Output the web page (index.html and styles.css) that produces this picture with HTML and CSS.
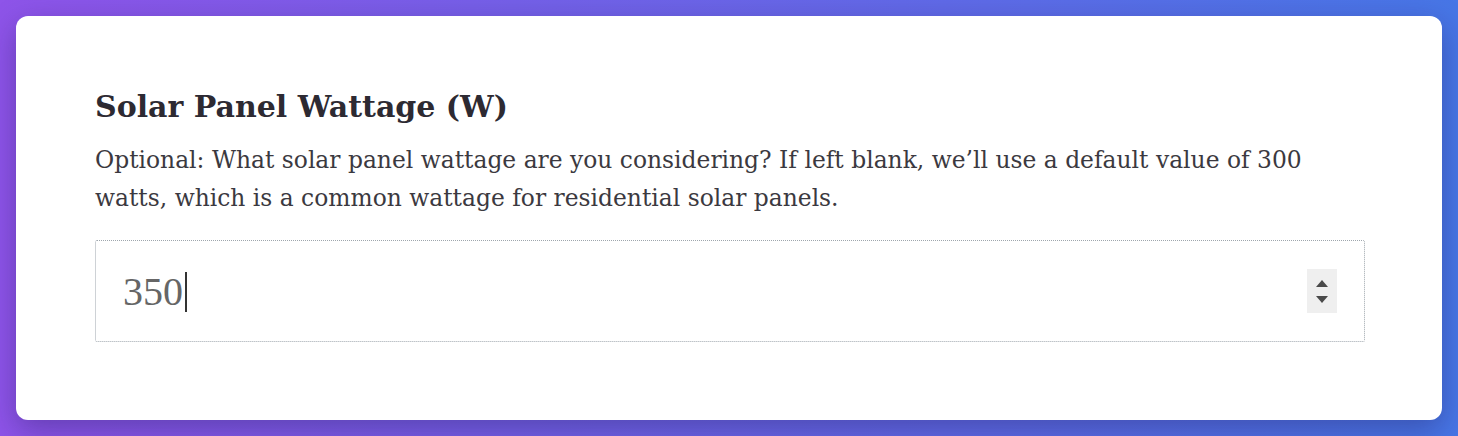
FILE: index.html
```html
<!DOCTYPE html>
<html lang="en">
<head>
<meta charset="utf-8">
<title>Solar Panel Wattage</title>
<link rel="stylesheet" href="styles.css">
</head>
<body>
  <main class="card">
    <div class="form-group">
      <label class="label" for="wattage">Solar Panel Wattage (W)</label>
      <p class="help">Optional: What solar panel wattage are you considering? If left blank, we’ll use a default value of 300 watts, which is a common wattage for residential solar panels.</p>
      <div class="field">
        <input id="wattage" class="num" type="number" value="350">
        <span class="caret"></span>
        <span class="spinner" aria-hidden="true">
          <svg width="14" height="34" viewBox="0 0 14 34">
            <path d="M1 13 L7 6 L13 13 Z" fill="#4a4a4a"/>
            <path d="M1 22 L13 22 L7 29 Z" fill="#4a4a4a"/>
          </svg>
        </span>
      </div>
    </div>
  </main>
</body>
</html>
```
FILE: styles.css
```css
* { box-sizing: border-box; }
html, body { height: 100%; }
body {
  margin: 0;
  padding: 16px;
  background: linear-gradient(to right, #8e54e9, #4776e6);
  font-family: "DejaVu Serif", serif;
}
.card {
  background: #fff;
  border-radius: 12px;
  box-shadow: 0 10px 30px rgba(30, 20, 80, 0.35);
  padding: 72px 77px 78px 79px;
  height: 404px;
}
.form-group {
  display: flex;
  flex-direction: column;
}
.label {
  font-weight: bold;
  font-size: 30px;
  line-height: 38px;
  color: #2d2a32;
}
.help {
  margin: 15px 0 23px;
  font-size: 23.4px;
  line-height: 38px;
  color: #3b3940;
}
.field {
  position: relative;
  display: flex;
  align-items: center;
  height: 102px;
  border: 1px dotted #9ea6ad;
  border-radius: 2px;
  padding: 0 27px;
}
.num {
  flex: 1;
  border: none;
  outline: none;
  background: transparent;
  font-family: "Liberation Serif", serif;
  font-size: 40px;
  color: #666;
  padding: 0;
  -moz-appearance: textfield;
}
.num::-webkit-inner-spin-button,
.num::-webkit-outer-spin-button {
  -webkit-appearance: none;
  margin: 0;
}
.caret {
  position: absolute;
  left: 89px;
  top: 31px;
  width: 2px;
  height: 40px;
  background: #333;
}
.spinner {
  display: flex;
  align-items: center;
  justify-content: center;
  width: 30px;
  height: 44px;
  background: #efefef;
}
.spinner svg { display: block; }
```
